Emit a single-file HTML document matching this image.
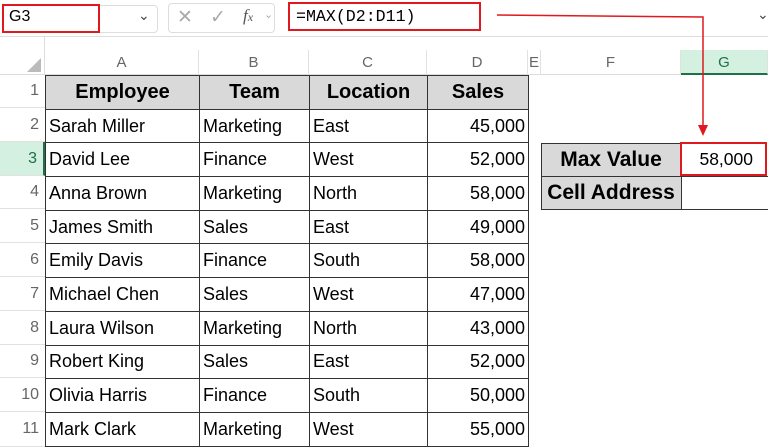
<!DOCTYPE html>
<html><head><meta charset="utf-8"><style>
*{margin:0;padding:0;box-sizing:border-box}
body{width:768px;height:447px;overflow:hidden;background:#fff;font-family:"Liberation Sans",sans-serif;position:relative}
.a{position:absolute}
.rn{position:absolute;left:0;width:45px;text-align:right;padding-right:6px;color:#666;font-size:16px;border-bottom:1px solid #e1e1e1;display:flex;align-items:center;justify-content:flex-end}
.ch{position:absolute;top:50px;height:25px;color:#666;font-size:15px;text-align:center;line-height:25px;border-right:1px solid #e1e1e1}
table{position:absolute;left:45px;top:75px;border-collapse:collapse;table-layout:fixed}
td{border:1px solid #333;font-size:18px;padding:0 3px;height:33.7px;white-space:nowrap;overflow:hidden;color:#000}
th{border:1px solid #333;background:#d9d9d9;font-size:20px;font-weight:bold;height:33.7px}
td.r{text-align:right}
</style></head><body>
<div class="a" style="left:2px;top:5px;width:156px;height:28px;border:1px solid #ddd;border-radius:4px"></div>
<div class="a" style="left:2px;top:4px;width:98px;height:29px;border:2px solid #e0191f"></div>
<div class="a" style="left:9px;top:8px;font-size:16px">G3</div>
<div class="a" style="left:138px;top:7px;font-size:14px;color:#444">&#8964;</div>
<div class="a" style="left:168px;top:3px;width:107px;height:30px;border:1px solid #ddd;border-radius:4px"></div>
<div class="a" style="left:177px;top:6px;font-size:19px;color:#aaa">✕</div>
<div class="a" style="left:210px;top:6px;font-size:19px;color:#aaa">✓</div>
<div class="a" style="left:243px;top:6px;font-size:17px;color:#555;font-style:italic;font-family:'Liberation Serif',serif">f<span style="font-size:12px">x</span></div>
<div class="a" style="left:264px;top:8px;font-size:11px;color:#aaa">&#8964;</div>
<div class="a" style="left:288px;top:2px;width:193px;height:29px;border:2px solid #e0191f"></div>
<div class="a" style="left:296px;top:7px;font-size:16.6px;font-family:'Liberation Mono',monospace">=MAX(D2:D11)</div>
<div class="a" style="left:757px;top:6px;font-size:14px;color:#444">&#8964;</div>
<div class="a" style="left:0;top:36px;width:768px;height:1px;background:#ddd"></div>
<div class="a" style="left:44px;top:37px;width:1px;height:38px;background:#ddd"></div>
<svg class="a" style="left:26px;top:57px" width="16" height="16"><polygon points="15,1 15,15 1,15" fill="#bbb"/></svg>
<div class="a" style="left:0;top:74px;width:768px;height:1px;background:#ddd"></div>
<div class="ch" style="left:45px;width:154px">A</div>
<div class="ch" style="left:199px;width:110px">B</div>
<div class="ch" style="left:309px;width:118px">C</div>
<div class="ch" style="left:427px;width:101px">D</div>
<div class="ch" style="left:528px;width:13px">E</div>
<div class="ch" style="left:541px;width:140px">F</div>
<div class="ch" style="left:681px;width:87px;background:#d3f0e0;color:#1e7145;border-bottom:2px solid #1e7145">G</div>
<div class="rn" style="top:75px;height:33px">1</div>
<div class="rn" style="top:108px;height:34px">2</div>
<div class="rn" style="top:142px;height:34px;background:#d3f0e0;color:#1e7145;border-right:2px solid #1e7145">3</div>
<div class="rn" style="top:176px;height:33px">4</div>
<div class="rn" style="top:209px;height:34px">5</div>
<div class="rn" style="top:243px;height:34px">6</div>
<div class="rn" style="top:277px;height:34px">7</div>
<div class="rn" style="top:311px;height:34px">8</div>
<div class="rn" style="top:345px;height:33px">9</div>
<div class="rn" style="top:378px;height:34px">10</div>
<div class="rn" style="top:412px;height:35px">11</div>
<table>
<colgroup><col style="width:154px"><col style="width:110px"><col style="width:118px"><col style="width:101px"></colgroup>
<tr><th>Employee</th><th>Team</th><th>Location</th><th>Sales</th></tr>
<tr><td>Sarah Miller</td><td>Marketing</td><td>East</td><td class="r">45,000</td></tr>
<tr><td>David Lee</td><td>Finance</td><td>West</td><td class="r">52,000</td></tr>
<tr><td>Anna Brown</td><td>Marketing</td><td>North</td><td class="r">58,000</td></tr>
<tr><td>James Smith</td><td>Sales</td><td>East</td><td class="r">49,000</td></tr>
<tr><td>Emily Davis</td><td>Finance</td><td>South</td><td class="r">58,000</td></tr>
<tr><td>Michael Chen</td><td>Sales</td><td>West</td><td class="r">47,000</td></tr>
<tr><td>Laura Wilson</td><td>Marketing</td><td>North</td><td class="r">43,000</td></tr>
<tr><td>Robert King</td><td>Sales</td><td>East</td><td class="r">52,000</td></tr>
<tr><td>Olivia Harris</td><td>Finance</td><td>South</td><td class="r">50,000</td></tr>
<tr><td>Mark Clark</td><td>Marketing</td><td>West</td><td class="r">55,000</td></tr>
</table>
<div class="a" style="left:541px;top:143px;width:141px;height:67px;background:#d9d9d9;border:1px solid #333"></div>
<div class="a" style="left:541px;top:176px;width:227px;height:1px;background:#333"></div>
<div class="a" style="left:681px;top:143px;width:1px;height:67px;background:#333"></div>
<div class="a" style="left:681px;top:209px;width:87px;height:1px;background:#333"></div>
<div class="a" style="left:541px;top:143px;width:140px;height:33px;font-size:21px;font-weight:bold;text-align:center;line-height:33px">Max Value</div>
<div class="a" style="left:541px;top:176px;width:140px;height:33px;font-size:21px;font-weight:bold;text-align:center;line-height:33px">Cell Address</div>
<div class="a" style="left:680px;top:142px;width:87px;height:34px;border:2px solid #e0191f;font-size:17.5px;text-align:right;padding-right:12px;line-height:30px">58,000</div>
<svg class="a" style="left:0;top:0" width="768" height="447">
<polyline points="497,15 703,17 703,128" fill="none" stroke="#e0191f" stroke-width="1.5"/>
<polygon points="698,125 708,125 703,136" fill="#e0191f"/>
</svg>
</body></html>
